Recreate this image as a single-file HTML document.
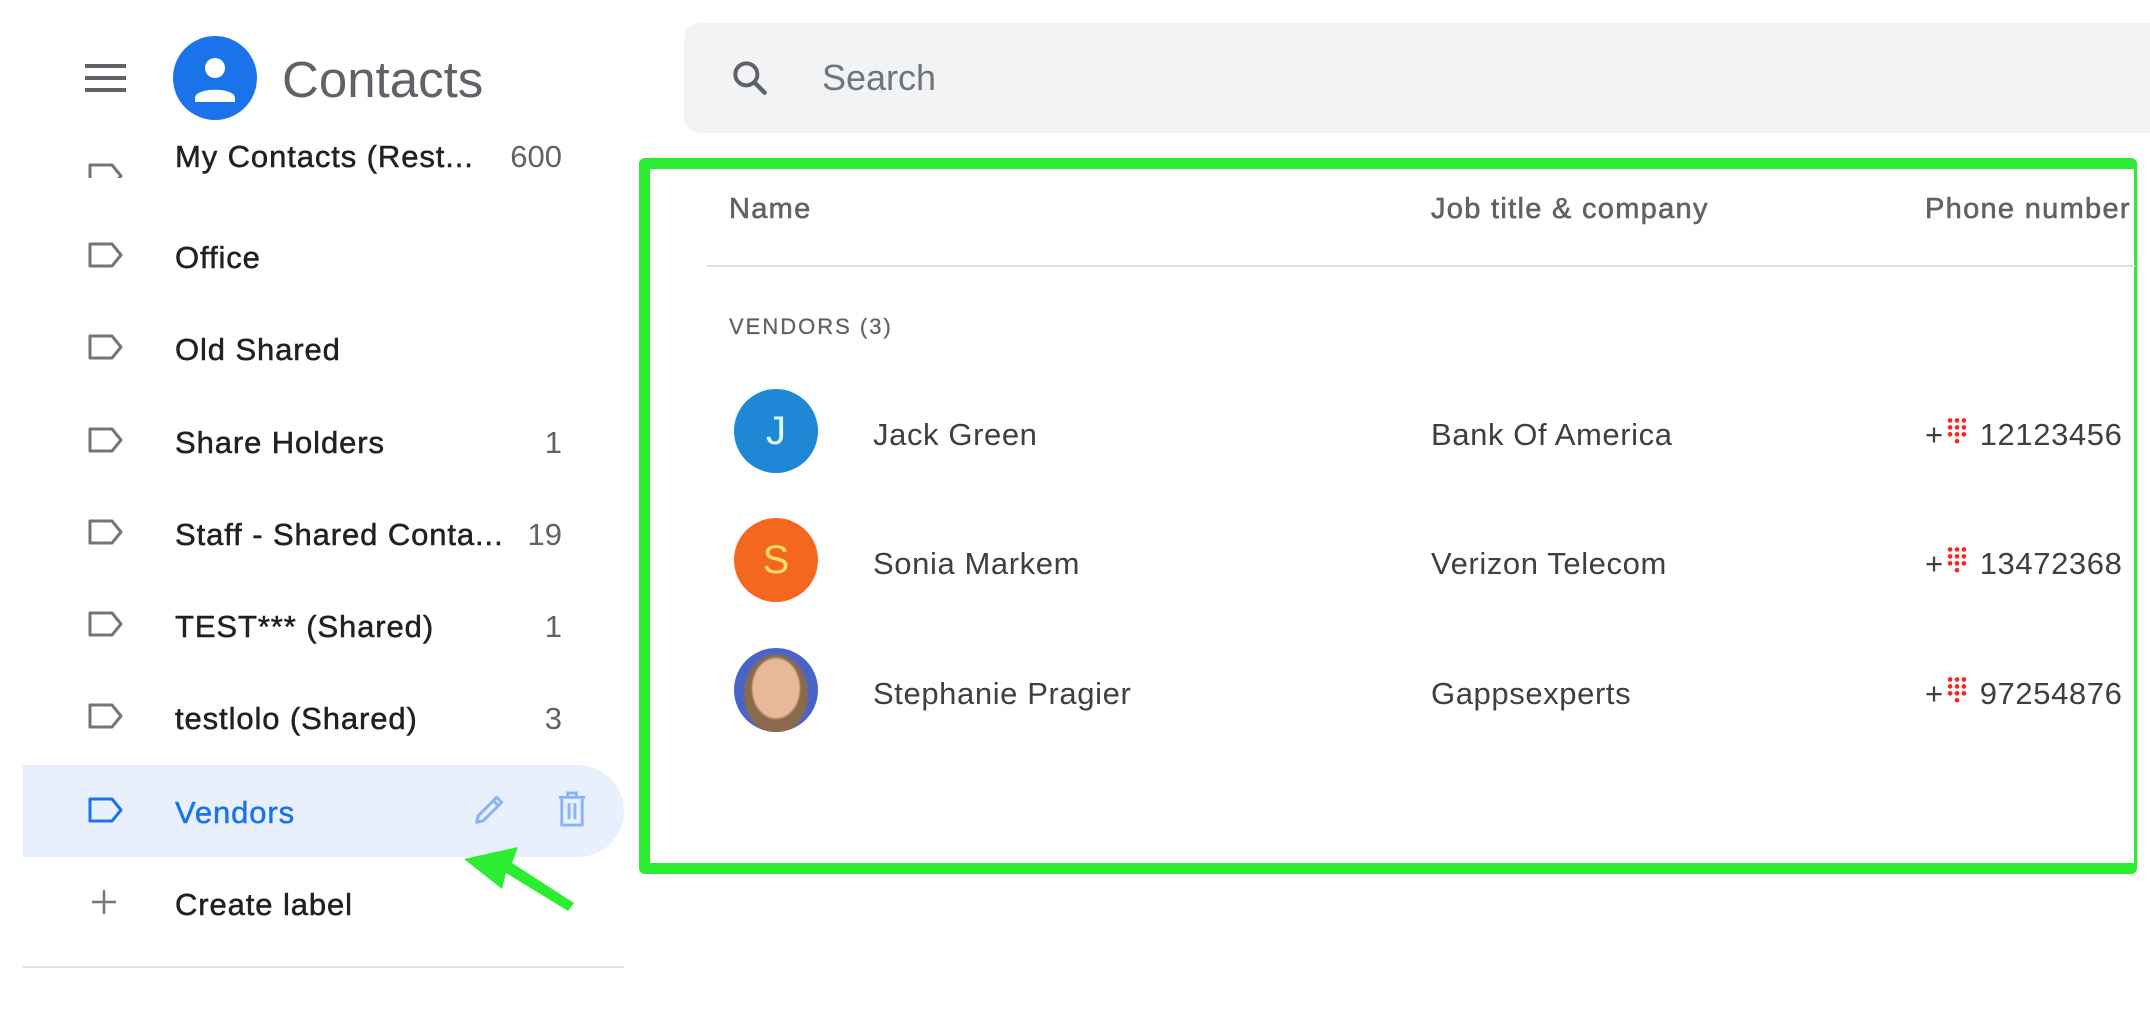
<!DOCTYPE html>
<html><head><meta charset="utf-8"><style>
*{margin:0;padding:0;box-sizing:border-box}
body{width:2150px;height:1036px;background:#fff;position:relative;overflow:hidden;font-family:"Liberation Sans",Arial,sans-serif;color:#202124}
.a{position:absolute}
.lbl{position:absolute;left:0;width:624px;height:92px}
.lbl svg{position:absolute;left:86px;top:31px}
.lbl .t{position:absolute;left:175px;top:30px;font-size:31px;color:#202124;white-space:nowrap;letter-spacing:0.9px;-webkit-text-stroke:0.5px #202124}
.lbl .c{position:absolute;right:62px;top:30px;font-size:31px;color:#5f6368}
.hd{position:absolute;top:193px;font-size:29px;color:#5f6368;letter-spacing:1.3px;-webkit-text-stroke:0.6px #5f6368}
.row{position:absolute;left:0;width:2150px;height:90px}
.av{position:absolute;left:734px;width:84px;height:84px;border-radius:50%;color:#fff;font-size:40px;text-align:center;line-height:84px}
.row .n,.row .co,.row .p{position:absolute;font-size:31px;color:#3c4043;top:28px;white-space:nowrap;letter-spacing:0.6px}
.ph{display:inline-block;width:22px;height:30px;vertical-align:-2px;margin:0 12px 0 2px}
</style></head><body>
<div class="a" style="left:85px;top:64px;width:41px;height:4px;background:#5f6368"></div>
<div class="a" style="left:85px;top:76px;width:41px;height:4px;background:#5f6368"></div>
<div class="a" style="left:85px;top:88px;width:41px;height:4px;background:#5f6368"></div>
<svg class="a" style="left:173px;top:36px" width="84" height="84" viewBox="0 0 84 84"><circle cx="42" cy="42" r="42" fill="#1a73e8"/><circle cx="42" cy="32" r="10" fill="#fff"/><path d="M22 62c0-11 40-11 40 0v4H22z" fill="#fff"/></svg>
<div class="a" style="left:282px;top:50px;font-size:51px;color:#5f6368">Contacts</div>
<div class="a" style="left:684px;top:23px;width:1480px;height:110px;background:#f1f3f4;border-radius:16px"></div>
<svg class="a" style="left:728px;top:56px" width="44" height="44" viewBox="0 0 24 24"><circle cx="10" cy="10" r="6" fill="none" stroke="#5f6368" stroke-width="2.2"/><path d="M14.5 14.5L20 20" stroke="#5f6368" stroke-width="2.4" stroke-linecap="round"/></svg>
<div class="a" style="left:822px;top:57px;font-size:36px;color:#70757a">Search</div>
<div class="a" style="left:0;top:138px;width:640px;height:40px;overflow:hidden"><div class="lbl" style="top:-7px"><svg width="40" height="28" viewBox="0 0 40 28"><path d="M4 3h22l9 11-9 11H4z" fill="none" stroke="#757575" stroke-width="3" stroke-linejoin="round"/></svg><div class="t" style="top:8px">My Contacts (Rest...</div><div class="c" style="top:8px">600</div></div></div>
<div class="lbl" style="top:210px"><svg width="40" height="28" viewBox="0 0 40 28"><path d="M4 3h22l9 11-9 11H4z" fill="none" stroke="#757575" stroke-width="3" stroke-linejoin="round"/></svg><div class="t">Office</div></div>
<div class="lbl" style="top:302px"><svg width="40" height="28" viewBox="0 0 40 28"><path d="M4 3h22l9 11-9 11H4z" fill="none" stroke="#757575" stroke-width="3" stroke-linejoin="round"/></svg><div class="t">Old Shared</div></div>
<div class="lbl" style="top:395px"><svg width="40" height="28" viewBox="0 0 40 28"><path d="M4 3h22l9 11-9 11H4z" fill="none" stroke="#757575" stroke-width="3" stroke-linejoin="round"/></svg><div class="t">Share Holders</div><div class="c">1</div></div>
<div class="lbl" style="top:487px"><svg width="40" height="28" viewBox="0 0 40 28"><path d="M4 3h22l9 11-9 11H4z" fill="none" stroke="#757575" stroke-width="3" stroke-linejoin="round"/></svg><div class="t">Staff - Shared Conta...</div><div class="c">19</div></div>
<div class="lbl" style="top:579px"><svg width="40" height="28" viewBox="0 0 40 28"><path d="M4 3h22l9 11-9 11H4z" fill="none" stroke="#757575" stroke-width="3" stroke-linejoin="round"/></svg><div class="t">TEST*** (Shared)</div><div class="c">1</div></div>
<div class="lbl" style="top:671px"><svg width="40" height="28" viewBox="0 0 40 28"><path d="M4 3h22l9 11-9 11H4z" fill="none" stroke="#757575" stroke-width="3" stroke-linejoin="round"/></svg><div class="t">testlolo (Shared)</div><div class="c">3</div></div>
<div class="a" style="left:23px;top:765px;width:601px;height:92px;background:#e8f0fe;border-radius:0 46px 46px 0"></div>
<div class="lbl" style="top:765px"><svg width="40" height="28" viewBox="0 0 40 28"><path d="M4 3h22l9 11-9 11H4z" fill="none" stroke="#1a73e8" stroke-width="3" stroke-linejoin="round"/></svg><div class="t" style="color:#1a73e8;-webkit-text-stroke:0.5px #1a73e8">Vendors</div></div>
<svg class="a" style="left:470px;top:789px" width="40" height="40" viewBox="0 0 24 24"><path d="M4 20l1-4L16 5l3 3L8 19z M14 7l3 3" fill="none" stroke="#8ab4f8" stroke-width="1.8" stroke-linejoin="round"/></svg>
<svg class="a" style="left:554px;top:790px" width="36" height="38" viewBox="0 0 24 26"><path d="M3 5h18M9 5V2h6v3M5 5v19h14V5M10 9v11M14 9v11" fill="none" stroke="#8ab4f8" stroke-width="2"/></svg>
<div class="lbl" style="top:857px"><svg width="40" height="28" viewBox="0 0 40 28" style="left:88px"><path d="M16 2v24M4 14h24" stroke="#757575" stroke-width="2.5"/></svg><div class="t">Create label</div></div>
<div class="a" style="left:23px;top:966px;width:601px;height:2px;background:#e0e0e0"></div>
<svg class="a" style="left:450px;top:845px" width="140" height="80" viewBox="0 0 140 80"><path d="M14 14L68 2 62 18 124 58 118 66 56 28 52 44z" fill="#2ded33"/></svg>
<div class="a" style="left:639px;top:158px;width:1498px;height:716px;border:11px solid #2ded33;border-right-width:3px;border-radius:6px"></div>
<div class="hd" style="left:729px">Name</div>
<div class="hd" style="left:1431px">Job title &amp; company</div>
<div class="hd" style="left:1925px;width:210px;overflow:hidden;white-space:nowrap">Phone number</div>
<div class="a" style="left:707px;top:265px;width:1428px;height:2px;background:#e0e0e0"></div>
<div class="a" style="left:729px;top:314px;font-size:22px;color:#5f6368;letter-spacing:2px;-webkit-text-stroke:0.3px #5f6368">VENDORS (3)</div>
<svg width="0" height="0" style="position:absolute"><defs><g id="g" fill="#f22"><circle cx="3" cy="3" r="2"/><circle cx="9" cy="3" r="2"/><circle cx="15" cy="3" r="2"/><circle cx="3" cy="9" r="2"/><circle cx="9" cy="9" r="2"/><circle cx="15" cy="9" r="2"/><circle cx="3" cy="15" r="2"/><circle cx="9" cy="15" r="2"/><circle cx="15" cy="15" r="2"/><circle cx="9" cy="21" r="2"/></g></defs></svg>
<div class="row" style="top:389px"><div class="av" style="background:#1e88d6;color:#dff">J</div><div class="n" style="left:873px">Jack Green</div><div class="co" style="left:1431px">Bank Of America</div><div class="p" style="left:1925px;width:210px;overflow:hidden">+<svg class="ph" viewBox="0 0 18 26"><use href="#g"/></svg>12123456</div></div>
<div class="row" style="top:518px"><div class="av" style="background:#f5671e;color:#fd6">S</div><div class="n" style="left:873px">Sonia Markem</div><div class="co" style="left:1431px">Verizon Telecom</div><div class="p" style="left:1925px;width:210px;overflow:hidden">+<svg class="ph" viewBox="0 0 18 26"><use href="#g"/></svg>13472368</div></div>
<div class="row" style="top:648px"><div class="av" style="background:radial-gradient(ellipse 30% 38% at 50% 48%,#e8b89a 0 90%,transparent 100%),radial-gradient(ellipse 40% 50% at 50% 55%,#8a6a4a 0 90%,transparent 100%),#4a63c8"></div><div class="n" style="left:873px">Stephanie Pragier</div><div class="co" style="left:1431px">Gappsexperts</div><div class="p" style="left:1925px;width:210px;overflow:hidden">+<svg class="ph" viewBox="0 0 18 26"><use href="#g"/></svg>97254876</div></div>
</body></html>
